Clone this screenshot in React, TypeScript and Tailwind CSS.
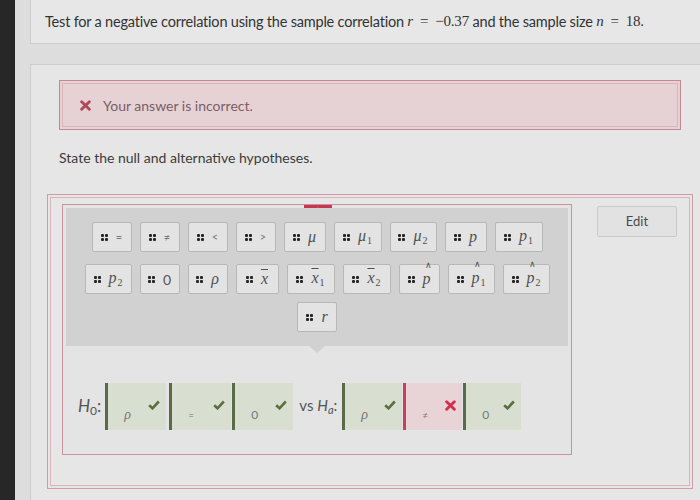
import React from 'react';

const serif = "font-['Liberation_Serif','Times_New_Roman',serif]";

function Grip() {
  return (
    <span className="grid grid-cols-2 gap-[1px]">
      <span className="w-[3px] h-[3px] rounded-[1px] bg-[#262626]" />
      <span className="w-[3px] h-[3px] rounded-[1px] bg-[#262626]" />
      <span className="w-[3px] h-[3px] rounded-[1px] bg-[#262626]" />
      <span className="w-[3px] h-[3px] rounded-[1px] bg-[#262626]" />
    </span>
  );
}

function Tile({ w, children }: { w: string; children: React.ReactNode }) {
  return (
    <div className={`${w} h-[30px] shrink-0 border border-[#b8b8b8] bg-[#e3e3e3] rounded-[2px] flex items-center justify-center gap-[8px]`}>
      <Grip />
      <span className="flex items-center text-[#555]">{children}</span>
    </div>
  );
}

function Op({ children }: { children: React.ReactNode }) {
  return <span className="text-[11px] text-[#7a7a7a]">{children}</span>;
}

function M({ children, sub }: { children: React.ReactNode; sub?: string }) {
  return (
    <span className={`${serif} italic text-[16px] leading-none text-[#505050]`}>
      {children}
      {sub && <span className="not-italic text-[10px] align-[-3px] ml-[1px]">{sub}</span>}
    </span>
  );
}

function Bar({ children, sub }: { children: React.ReactNode; sub?: string }) {
  return (
    <span className={`${serif} italic text-[16px] leading-none text-[#505050]`}>
      <span className="overline decoration-[1px]">{children}</span>
      {sub && <span className="not-italic text-[10px] align-[-3px] ml-[1px]">{sub}</span>}
    </span>
  );
}

function Hat({ sub }: { sub?: string }) {
  return (
    <span className={`${serif} italic text-[16px] leading-none text-[#505050] relative`}>
      <span className="absolute left-[2px] top-[-10px] not-italic text-[9px] text-[#555]">∧</span>
      p
      {sub && <span className="not-italic text-[10px] align-[-3px] ml-[1px]">{sub}</span>}
    </span>
  );
}

function Check() {
  return (
    <svg width="12" height="10" viewBox="0 0 12 10">
      <polyline points="1.2,5.2 4.5,8.3 10.8,1.5" fill="none" stroke="#5a7040" strokeWidth="2.6" />
    </svg>
  );
}

function Cross({ color, size }: { color: string; size: number }) {
  return (
    <svg width={size} height={size} viewBox="0 0 10 10">
      <path d="M1.5 1.5 L8.5 8.5 M8.5 1.5 L1.5 8.5" stroke={color} strokeWidth="2.6" strokeLinecap="round" />
    </svg>
  );
}

function Drop({ w, wrong, children }: { w: string; wrong?: boolean; children: React.ReactNode }) {
  return (
    <div
      className={`${w} h-[47px] shrink-0 relative border-l-[3px] ${
        wrong ? 'border-[#c8405a] bg-[#e8d4d7]' : 'border-[#5b6a4a] bg-[#d8dfd1]'
      }`}
    >
      <span className="absolute left-[16px] bottom-[5px] text-[#777]">{children}</span>
      <span className="absolute right-[6px] top-[17px]">
        {wrong ? <Cross color="#d22f50" size={11} /> : <Check />}
      </span>
    </div>
  );
}

export default function App() {
  return (
    <div className="w-[700px] h-[500px] overflow-hidden flex bg-[#dddddd] font-['Lato','Liberation_Sans',sans-serif]">
      <div className="w-[15px] shrink-0 bg-[#272727]" />

      <div className="flex-1 flex flex-col pl-[15px]">
        {/* question */}
        <div className="h-[44px] shrink-0 bg-[#e7e7e7] border-b border-l border-[#cdcdcd] pl-[14px] flex items-center text-[14.5px] text-[#333] tracking-[-0.2px]">
          Test for a negative correlation using the sample correlation&nbsp;
          <span className={`${serif} italic text-[15px]`}>r</span>
          <span className={`${serif} text-[15px] mx-[7px]`}>=</span>
          <span className={`${serif} text-[15px]`}>−0.37</span>
          &nbsp;and the sample size&nbsp;
          <span className={`${serif} italic text-[15px]`}>n</span>
          <span className={`${serif} text-[15px] mx-[7px]`}>=</span>
          <span className={`${serif} text-[15px]`}>18.</span>
        </div>

        <div className="mt-[20px] flex-1 bg-[#e6e6e6] border-t border-l border-[#cdcdcd]">
          {/* feedback */}
          <div className="ml-[28px] mt-[15px] w-[622px] h-[50px] border border-[#c48894] p-[2px] bg-[#e6d2d5]">
            <div className="h-full border border-[#dcb5bc] flex items-center pl-[17px] gap-[12px]">
              <Cross color="#b0485a" size={11} />
              <span className="text-[14px] text-[#7b5e66]">Your answer is incorrect.</span>
            </div>
          </div>

          <div className="ml-[28px] mt-[18px] text-[14px] leading-[20px] text-[#3c3c3c]">
            State the null and alternative hypotheses.
          </div>

          {/* answer box */}
          <div className="ml-[16px] mt-[26px] w-[646px] h-[295px] border border-[#cf9ba5] p-[2px]">
            <div className="h-full border border-[#d9b4bb] flex items-start pl-[11px] pt-[6px]">
              {/* palette */}
              <div className="w-[510px] h-[251px] shrink-0 border border-[#c9929c] p-[3px] bg-[#e4e4e4] flex flex-col relative">
                <div className="absolute top-[0px] left-[241px] w-[28px] h-[8px] bg-[#c8364f] flex items-center justify-center">
                  <svg width="8" height="5" viewBox="0 0 8 5">
                    <polyline points="1,4.5 4,1.5 7,4.5" fill="none" stroke="#f3c9d0" strokeWidth="1.5" />
                  </svg>
                </div>

                <div className="h-[138px] shrink-0 bg-[#d1d1d1] relative flex flex-col items-center pt-[14px]">
                  <div className="flex gap-[8px]">
                    <Tile w="w-[40px]"><Op>=</Op></Tile>
                    <Tile w="w-[40px]"><Op>≠</Op></Tile>
                    <Tile w="w-[40px]"><Op>&lt;</Op></Tile>
                    <Tile w="w-[40px]"><Op>&gt;</Op></Tile>
                    <Tile w="w-[42px]"><M>μ</M></Tile>
                    <Tile w="w-[48px]"><M sub="1">μ</M></Tile>
                    <Tile w="w-[47px]"><M sub="2">μ</M></Tile>
                    <Tile w="w-[42px]"><M>p</M></Tile>
                    <Tile w="w-[48px]"><M sub="1">p</M></Tile>
                  </div>
                  <div className="flex gap-[8px] mt-[12px]">
                    <Tile w="w-[47px]"><M sub="2">p</M></Tile>
                    <Tile w="w-[40px]"><span className="text-[14px] text-[#555]">0</span></Tile>
                    <Tile w="w-[40px]"><M>ρ</M></Tile>
                    <Tile w="w-[43px]"><Bar>x</Bar></Tile>
                    <Tile w="w-[48px]"><Bar sub="1">x</Bar></Tile>
                    <Tile w="w-[48px]"><Bar sub="2">x</Bar></Tile>
                    <Tile w="w-[41px]"><Hat /></Tile>
                    <Tile w="w-[47px]"><Hat sub="1" /></Tile>
                    <Tile w="w-[47px]"><Hat sub="2" /></Tile>
                  </div>
                  <div className="flex mt-[8px]">
                    <Tile w="w-[40px]"><M>r</M></Tile>
                  </div>
                  <div className="absolute bottom-[-7px] left-1/2 -translate-x-1/2 w-0 h-0 border-x-[8px] border-x-transparent border-t-[7px] border-t-[#d1d1d1]" />
                </div>

                {/* hypotheses */}
                <div className="flex items-center pl-[12px] mt-[37px]">
                  <span className="text-[17px] text-[#555] mr-[4px]">
                    <span className="italic">H</span>
                    <span className="text-[12px] align-[-3px]">0</span>:
                  </span>
                  <Drop w="w-[61px]"><span className={`${serif} italic text-[14px]`}>ρ</span></Drop>
                  <div className="w-[3px]" />
                  <Drop w="w-[62px]"><span className="text-[10px]">=</span></Drop>
                  <div className="w-[1px]" />
                  <Drop w="w-[61px]"><span className="text-[12px]">0</span></Drop>
                  <span className="text-[15px] text-[#555] ml-[6px] mr-[5px]">
                    vs <span className="italic">H</span>
                    <span className="italic text-[11px] align-[-3px]">a</span>:
                  </span>
                  <Drop w="w-[60px]"><span className={`${serif} italic text-[14px]`}>ρ</span></Drop>
                  <div className="w-[1px]" />
                  <Drop w="w-[59px]" wrong><span className="text-[10px]">≠</span></Drop>
                  <div className="w-[1px]" />
                  <Drop w="w-[58px]"><span className="text-[12px]">0</span></Drop>
                </div>
              </div>

              {/* edit */}
              <div className="ml-[25px] mt-[2px] w-[80px] h-[31px] border border-[#c9c9c9] bg-[#e2e2e2] rounded-[2px] flex items-center justify-center text-[13px] text-[#4a4a4a]">
                Edit
              </div>
            </div>
          </div>
        </div>
      </div>
    </div>
  );
}
